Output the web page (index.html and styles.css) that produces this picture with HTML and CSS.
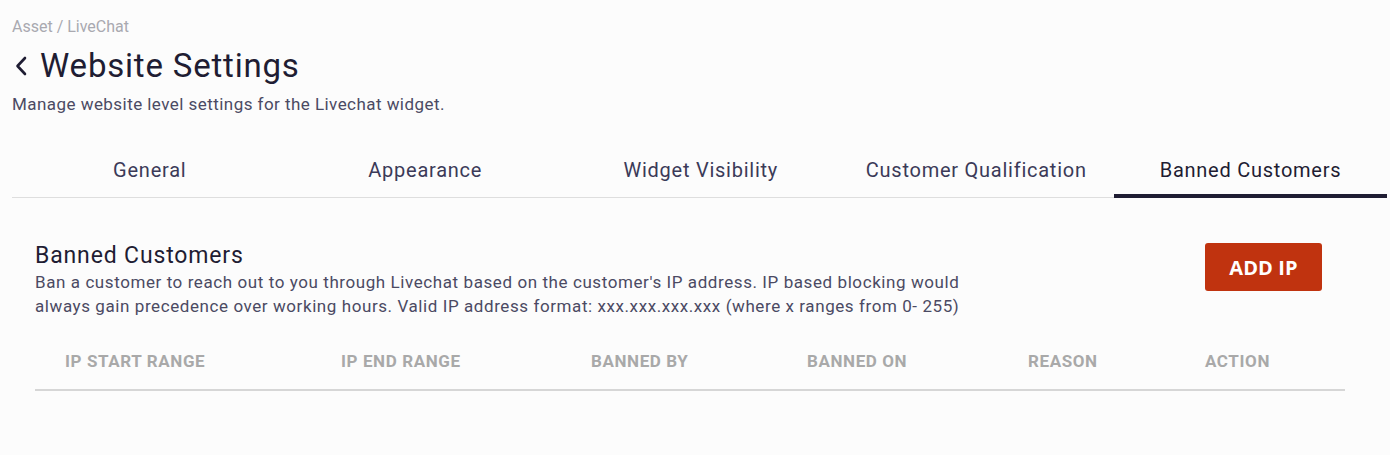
FILE: index.html
```html
<!DOCTYPE html>
<html>
<head>
<meta charset="utf-8">
<link rel="stylesheet" href="styles.css">
</head>
<body>
<div class="page">
  <div class="crumb">Asset / LiveChat</div>
  <div class="title-row">
    <svg class="back" width="14" height="24" viewBox="0 0 14 24"><path d="M11 4 L3.5 12 L11 20" fill="none" stroke="#1f1d33" stroke-width="2.6" stroke-linecap="round" stroke-linejoin="round"/></svg>
    <h1 class="title">Website Settings</h1>
  </div>
  <p class="subtitle">Manage website level settings for the Livechat widget.</p>
  <nav class="tabs">
    <div class="tab">General</div>
    <div class="tab">Appearance</div>
    <div class="tab">Widget Visibility</div>
    <div class="tab">Customer Qualification</div>
    <div class="tab active">Banned Customers</div>
  </nav>
  <section class="section">
    <div class="section-head">
      <div class="section-text">
        <h2 class="section-title">Banned Customers</h2>
        <p class="section-desc">Ban a customer to reach out to you through Livechat based on the customer's IP address. IP based blocking would always gain precedence over working hours. Valid IP address format: xxx.xxx.xxx.xxx (where x ranges from 0- 255)</p>
      </div>
      <button class="btn">ADD IP</button>
    </div>
    <div class="table-head">
      <div>IP START RANGE</div>
      <div>IP END RANGE</div>
      <div>BANNED BY</div>
      <div>BANNED ON</div>
      <div>REASON</div>
      <div>ACTION</div>
    </div>
  </section>
</div>
</body>
</html>
```
FILE: styles.css
```css
* { box-sizing: border-box; }
html, body { margin: 0; padding: 0; background: #fcfcfc; }
body { font-family: Roboto, "Noto Sans", sans-serif; color: #1f1d33; }
.page { padding: 17px 3px 0 12px; }
.crumb { font-size: 16px; color: #a9a9b0; line-height: 20px; }
.title-row { display: flex; align-items: center; margin-top: 9px; height: 40px; }
.back { margin-left: 2px; margin-right: 12px; }
.title { margin: 0; font-size: 33px; font-weight: 400; line-height: 40px; color: #1f1d33; letter-spacing: 0.8px; }
.subtitle { margin: 8px 0 0; font-size: 17px; line-height: 20px; color: #4b4a63; letter-spacing: 0.45px; }
.tabs { display: grid; grid-template-columns: repeat(4, 275.5px) 1fr; margin-top: 44px; border-bottom: 1px solid #dedede; }
.tab { text-align: center; font-size: 20px; line-height: 24px; color: #3b3a58; padding: 0 0 12px; border-bottom: 4px solid transparent; margin-bottom: -1px; letter-spacing: 0.75px; }
.tab.active { border-bottom-color: #1f1d33; color: #1f1d33; }
.section { padding: 44px 0 0 23px; width: 1333px; }
.section-head { display: flex; justify-content: space-between; align-items: flex-start; }
.section-title { margin: 0; font-size: 23px; font-weight: 400; line-height: 28px; color: #1f1d33; letter-spacing: 0.85px; }
.section-desc { margin: 0; width: 965px; font-size: 17px; line-height: 24px; color: #4b4a63; letter-spacing: 0.58px; }
.btn { margin-top: 1px; margin-right: 23px; width: 117px; height: 48px; border: none; border-radius: 3px; background: #c0330f; color: #fff; font-family: "Open Sans", sans-serif; font-weight: 700; font-size: 20px; letter-spacing: 0.1px; }
.table-head { display: grid; grid-template-columns: 276px 250px 216px 221px 177px 1fr; margin-top: 33px; padding: 0 0 18px 30px; border-bottom: 2px solid #d6d6d6; font-size: 17px; font-weight: 700; color: #a9a9a9; line-height: 20px; letter-spacing: 0.6px; }
```
